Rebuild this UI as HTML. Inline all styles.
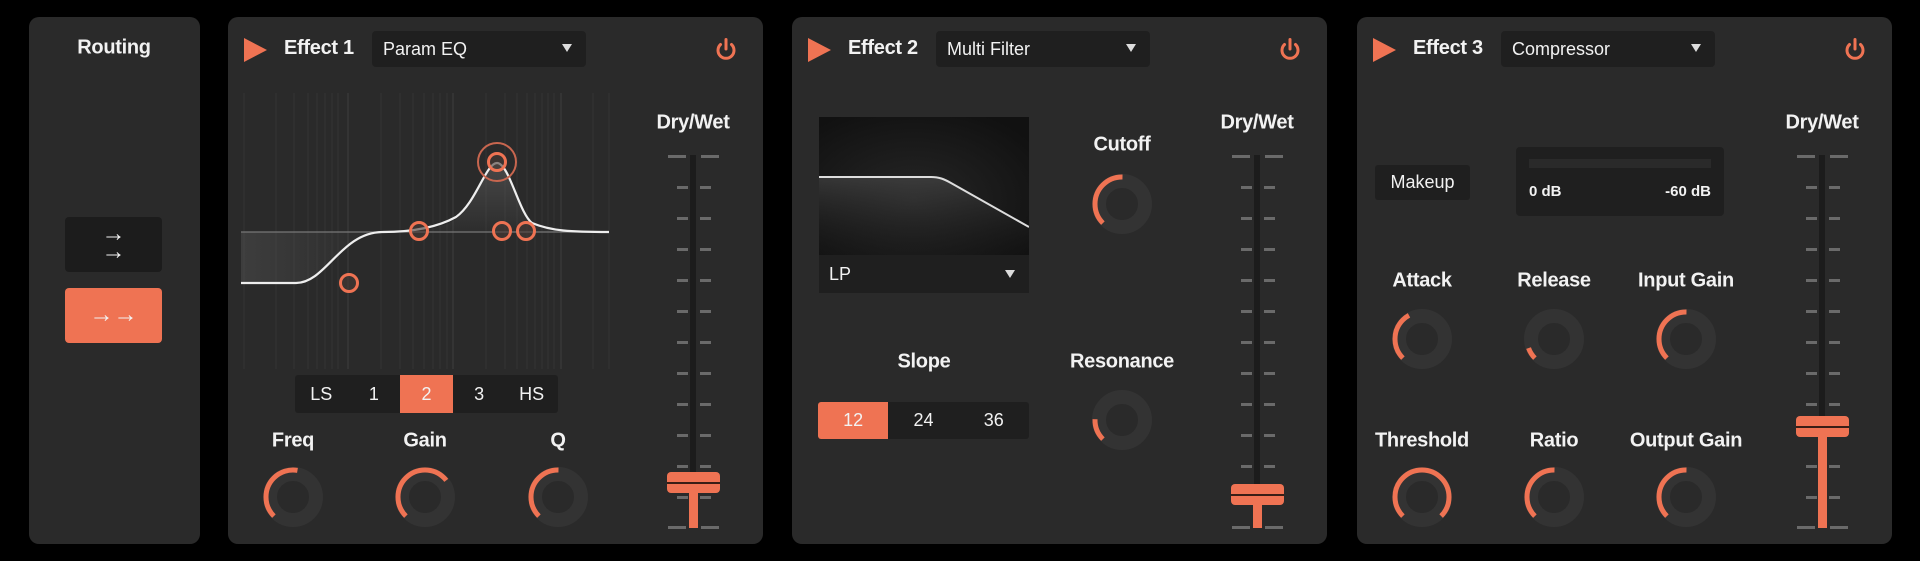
<!DOCTYPE html>
<html><head><meta charset="utf-8"><style>
*{margin:0;padding:0;box-sizing:border-box}
body{width:1920px;height:561px;background:#000;position:relative;overflow:hidden;font-family:"Liberation Sans",sans-serif;color:#f2f2f2}
.p{position:absolute;top:17px;height:527px;background:#2a2a2a;border-radius:10px}
.a{position:absolute}
.lbl{position:absolute;font-weight:bold;font-size:20px;transform:translate(-50%,-50%);white-space:nowrap;letter-spacing:-0.3px}
.play{position:absolute;left:16px;top:21px;width:0;height:0;border-top:12px solid transparent;border-bottom:12px solid transparent;border-left:23px solid #ef7353}
.title{position:absolute;left:56px;top:20px;font-weight:bold;font-size:20px;letter-spacing:-0.3px}
.dd{position:absolute;left:144px;top:14px;width:214px;height:36px;background:#1f1f1f;border-radius:4px;font-size:18px;padding:8px 0 0 11px}
.dd i,.lp i{position:absolute;right:14px;top:13px;width:0;height:0;border-left:5px solid transparent;border-right:5px solid transparent;border-top:8px solid #ddd}
.pw{position:absolute;left:486px;top:20px}
.track{position:absolute;left:462px;top:138px;width:6px;height:372px;background:#1c1c1c}
.tk{position:absolute;top:169px;width:11px;height:313px;background:repeating-linear-gradient(#6a6a6a 0 3px,transparent 3px 31px)}
.tl{position:absolute;width:18px;height:3px;background:#6a6a6a}
.hd{position:absolute;left:439px;width:53px;height:21px;background:#ef7353;border-radius:4px}
.hd:after{content:"";position:absolute;left:0;right:0;top:10px;height:2px;background:#3a1e16}
.st{position:absolute;left:461px;width:9px;background:#ef7353}
.seg{position:absolute;background:#1f1f1f;display:flex;font-size:18px;border-radius:3px;overflow:hidden}
.seg div{flex:1;text-align:center}
.seg .on{background:#ef7353}
</style></head><body>

<svg width="0" height="0" style="position:absolute"><defs>
<g id="pwr"><path d="M6.5 7.5 A8 8 0 1 0 17.5 7.5" fill="none" stroke="#ef7353" stroke-width="3" stroke-linecap="round"/><line x1="12" y1="2.5" x2="12" y2="12" stroke="#ef7353" stroke-width="3" stroke-linecap="round"/></g>
</defs></svg>

<!-- Routing -->
<div class="p" style="left:29px;width:171px">
  <div class="lbl" style="left:85px;top:31px">Routing</div>
  <div class="a" style="left:36px;top:200px;width:97px;height:55px;background:#1c1c1c;border-radius:4px"></div>
  <div class="a" style="left:36px;top:208px;width:97px;text-align:center;font-size:24px;line-height:18px;font-weight:bold">→<br>→</div>
  <div class="a" style="left:36px;top:271px;width:97px;height:55px;background:#ef7353;border-radius:4px;text-align:center;font-size:24px;line-height:53px;font-weight:bold">→→</div>
</div>

<!-- Effect 1 -->
<div class="p" style="left:228px;width:535px">
  <div class="play"></div><div class="title">Effect 1</div>
  <div class="dd">Param EQ<i></i></div>
  <svg class="pw" width="24" height="24"><use href="#pwr"/></svg>
  <svg class="a" style="left:13px;top:76px" width="370" height="276">
    <defs><linearGradient id="gf" x1="0" x2="1"><stop offset="0" stop-color="#555" stop-opacity=".45"/><stop offset="1" stop-color="#555" stop-opacity="0"/></linearGradient>
    <linearGradient id="gp" x1="0" y1="0" x2="0" y2="1"><stop offset="0" stop-color="#666" stop-opacity=".5"/><stop offset="1" stop-color="#666" stop-opacity=".05"/></linearGradient></defs>
    <g stroke="#343434" stroke-width="1">
      <line x1="3" y1="0" x2="3" y2="276"/><line x1="35" y1="0" x2="35" y2="276"/><line x1="53" y1="0" x2="53" y2="276"/><line x1="67" y1="0" x2="67" y2="276"/><line x1="76" y1="0" x2="76" y2="276"/><line x1="84" y1="0" x2="84" y2="276"/><line x1="91" y1="0" x2="91" y2="276"/><line x1="97" y1="0" x2="97" y2="276"/><line x1="107" y1="0" x2="107" y2="276" stroke="#3e3e3e"/><line x1="140" y1="0" x2="140" y2="276"/><line x1="159" y1="0" x2="159" y2="276"/><line x1="172" y1="0" x2="172" y2="276"/><line x1="183" y1="0" x2="183" y2="276"/><line x1="192" y1="0" x2="192" y2="276"/><line x1="199" y1="0" x2="199" y2="276"/><line x1="206" y1="0" x2="206" y2="276"/><line x1="212" y1="0" x2="212" y2="276" stroke="#3e3e3e"/><line x1="245" y1="0" x2="245" y2="276"/><line x1="264" y1="0" x2="264" y2="276"/><line x1="276" y1="0" x2="276" y2="276"/><line x1="286" y1="0" x2="286" y2="276"/><line x1="294" y1="0" x2="294" y2="276"/><line x1="301" y1="0" x2="301" y2="276"/><line x1="307" y1="0" x2="307" y2="276"/><line x1="313" y1="0" x2="313" y2="276"/><line x1="320" y1="0" x2="320" y2="276" stroke="#3e3e3e"/><line x1="352" y1="0" x2="352" y2="276"/><line x1="368" y1="0" x2="368" y2="276"/>
    </g>
    <path d="M0 139 L0 190 L55 190 C85 190 100 139 142 139 Z" fill="url(#gf)"/>
    <path d="M180 139 C200 134 210 130 215 126 C235 110 245 70 256 70 C268 70 278 120 291 130 C310 138 330 139 368 139 Z" fill="url(#gp)"/>
    <line x1="0" y1="139" x2="368" y2="139" stroke="#777" stroke-width="1.2"/>
    <path d="M0 190 L55 190 C85 190 100 139 142 139 C170 139 195 135 215 124 C235 110 245 70 256 70 C268 70 278 120 291 130 C310 138 330 139 368 139" fill="none" stroke="#eee" stroke-width="2.2"/>
    <g fill="#4a3a36" fill-opacity=".6" stroke="#ef7353" stroke-width="3">
      <circle cx="108" cy="190" r="8.5"/><circle cx="178" cy="138" r="8.5"/><circle cx="256" cy="69" r="8.5"/><circle cx="261" cy="138" r="8.5"/><circle cx="285" cy="138" r="8.5"/>
    </g>
    <circle cx="256" cy="69" r="19" fill="none" stroke="#c8664f" stroke-width="2"/>
  </svg>
  <div class="seg" style="left:67px;top:358px;width:263px;height:38px;line-height:38px"><div>LS</div><div>1</div><div class="on">2</div><div>3</div><div>HS</div></div>
  <div class="lbl" style="left:65px;top:424px">Freq</div>
  <div class="lbl" style="left:197px;top:424px">Gain</div>
  <div class="lbl" style="left:330px;top:424px">Q</div>
  <svg class="a" style="left:35px;top:450px" width="60" height="60"><circle cx="30" cy="30" r="23" fill="none" stroke="#333" stroke-width="14"/><circle cx="30" cy="30" r="27" fill="none" stroke="#ef7353" stroke-width="5" stroke-dasharray="68 300" transform="rotate(135 30 30)"/></svg>
  <svg class="a" style="left:167px;top:450px" width="60" height="60"><circle cx="30" cy="30" r="23" fill="none" stroke="#333" stroke-width="14"/><circle cx="30" cy="30" r="27" fill="none" stroke="#ef7353" stroke-width="5" stroke-dasharray="88 300" transform="rotate(135 30 30)"/></svg>
  <svg class="a" style="left:300px;top:450px" width="60" height="60"><circle cx="30" cy="30" r="23" fill="none" stroke="#333" stroke-width="14"/><circle cx="30" cy="30" r="27" fill="none" stroke="#ef7353" stroke-width="5" stroke-dasharray="64 300" transform="rotate(135 30 30)"/></svg>
  <div class="lbl" style="left:465px;top:106px">Dry/Wet</div>
  <div class="track"></div>
  <div class="tl" style="left:440px;top:138px"></div><div class="tl" style="left:473px;top:138px"></div>
  <div class="tk" style="left:449px"></div><div class="tk" style="left:472px"></div>
  <div class="tl" style="left:440px;top:509px"></div><div class="tl" style="left:473px;top:509px"></div>
  <div class="st" style="top:470px;height:41px"></div>
  <div class="hd" style="top:455px"></div>
</div>

<!-- Effect 2 -->
<div class="p" style="left:792px;width:535px">
  <div class="play"></div><div class="title">Effect 2</div>
  <div class="dd">Multi Filter<i></i></div>
  <svg class="pw" width="24" height="24"><use href="#pwr"/></svg>
  <svg class="a" style="left:27px;top:100px" width="210" height="138">
    <defs><radialGradient id="fb" cx=".45" cy=".6" r=".7"><stop offset="0" stop-color="#262626"/><stop offset="1" stop-color="#111"/></radialGradient>
    <linearGradient id="ff" x1="0" y1="0" x2="0" y2="1"><stop offset="0" stop-color="#555"/><stop offset="1" stop-color="#1a1a1a" stop-opacity="0"/></linearGradient></defs>
    <rect width="210" height="138" fill="url(#fb)"/>
    <path d="M0 60 L112 60 C120 60 125 62 132 66 L210 112 L210 138 L0 138 Z" fill="url(#ff)" opacity=".5"/>
    <path d="M0 60 L112 60 C120 60 125 62 132 66 L210 110" fill="none" stroke="#ddd" stroke-width="2"/>
  </svg>
  <div class="lp a" style="left:27px;top:238px;width:210px;height:38px;background:#1f1f1f;font-size:18px;padding:9px 0 0 10px">LP<i style="top:15px"></i></div>
  <div class="lbl" style="left:330px;top:128px">Cutoff</div>
  <svg class="a" style="left:300px;top:157px" width="60" height="60"><circle cx="30" cy="30" r="23" fill="none" stroke="#333" stroke-width="14"/><circle cx="30" cy="30" r="27" fill="none" stroke="#ef7353" stroke-width="5" stroke-dasharray="64 300" transform="rotate(135 30 30)"/></svg>
  <div class="lbl" style="left:132px;top:345px">Slope</div>
  <div class="seg" style="left:26px;top:385px;width:211px;height:37px;line-height:37px"><div class="on">12</div><div>24</div><div>36</div></div>
  <div class="lbl" style="left:330px;top:345px">Resonance</div>
  <svg class="a" style="left:300px;top:373px" width="60" height="60"><circle cx="30" cy="30" r="23" fill="none" stroke="#333" stroke-width="14"/><circle cx="30" cy="30" r="27" fill="none" stroke="#ef7353" stroke-width="5" stroke-dasharray="22 300" transform="rotate(135 30 30)"/></svg>
  <div class="lbl" style="left:465px;top:106px">Dry/Wet</div>
  <div class="track"></div>
  <div class="tl" style="left:440px;top:138px"></div><div class="tl" style="left:473px;top:138px"></div>
  <div class="tk" style="left:449px"></div><div class="tk" style="left:472px"></div>
  <div class="tl" style="left:440px;top:509px"></div><div class="tl" style="left:473px;top:509px"></div>
  <div class="st" style="top:480px;height:31px"></div>
  <div class="hd" style="top:467px"></div>
</div>

<!-- Effect 3 -->
<div class="p" style="left:1357px;width:535px">
  <div class="play"></div><div class="title">Effect 3</div>
  <div class="dd">Compressor<i></i></div>
  <svg class="pw" width="24" height="24"><use href="#pwr"/></svg>
  <div class="a" style="left:18px;top:148px;width:95px;height:35px;background:#1f1f1f;border-radius:3px;font-size:18px;text-align:center;line-height:35px">Makeup</div>
  <div class="a" style="left:159px;top:130px;width:208px;height:69px;background:#1f1f1f;border-radius:4px"></div>
  <div class="a" style="left:172px;top:142px;width:182px;height:9px;background:#2a2a2a"></div>
  <div class="a" style="left:172px;top:166px;font-size:15px;font-weight:bold">0 dB</div>
  <div class="a" style="left:300px;top:166px;width:54px;text-align:right;font-size:15px;font-weight:bold">-60 dB</div>
  <div class="lbl" style="left:65px;top:264px">Attack</div>
  <div class="lbl" style="left:197px;top:264px">Release</div>
  <div class="lbl" style="left:329px;top:264px">Input Gain</div>
  <svg class="a" style="left:35px;top:292px" width="60" height="60"><circle cx="30" cy="30" r="23" fill="none" stroke="#333" stroke-width="14"/><circle cx="30" cy="30" r="27" fill="none" stroke="#ef7353" stroke-width="5" stroke-dasharray="50 300" transform="rotate(135 30 30)"/></svg>
  <svg class="a" style="left:167px;top:292px" width="60" height="60"><circle cx="30" cy="30" r="23" fill="none" stroke="#333" stroke-width="14"/><circle cx="30" cy="30" r="27" fill="none" stroke="#ef7353" stroke-width="5" stroke-dasharray="12 300" transform="rotate(135 30 30)"/></svg>
  <svg class="a" style="left:299px;top:292px" width="60" height="60"><circle cx="30" cy="30" r="23" fill="none" stroke="#333" stroke-width="14"/><circle cx="30" cy="30" r="27" fill="none" stroke="#ef7353" stroke-width="5" stroke-dasharray="64 300" transform="rotate(135 30 30)"/></svg>
  <div class="lbl" style="left:65px;top:424px">Threshold</div>
  <div class="lbl" style="left:197px;top:424px">Ratio</div>
  <div class="lbl" style="left:329px;top:424px">Output Gain</div>
  <svg class="a" style="left:35px;top:450px" width="60" height="60"><circle cx="30" cy="30" r="23" fill="none" stroke="#333" stroke-width="14"/><circle cx="30" cy="30" r="27" fill="none" stroke="#ef7353" stroke-width="5" stroke-dasharray="127 300" transform="rotate(135 30 30)"/></svg>
  <svg class="a" style="left:167px;top:450px" width="60" height="60"><circle cx="30" cy="30" r="23" fill="none" stroke="#333" stroke-width="14"/><circle cx="30" cy="30" r="27" fill="none" stroke="#ef7353" stroke-width="5" stroke-dasharray="64 300" transform="rotate(135 30 30)"/></svg>
  <svg class="a" style="left:299px;top:450px" width="60" height="60"><circle cx="30" cy="30" r="23" fill="none" stroke="#333" stroke-width="14"/><circle cx="30" cy="30" r="27" fill="none" stroke="#ef7353" stroke-width="5" stroke-dasharray="64 300" transform="rotate(135 30 30)"/></svg>
  <div class="lbl" style="left:465px;top:106px">Dry/Wet</div>
  <div class="track"></div>
  <div class="tl" style="left:440px;top:138px"></div><div class="tl" style="left:473px;top:138px"></div>
  <div class="tk" style="left:449px"></div><div class="tk" style="left:472px"></div>
  <div class="tl" style="left:440px;top:509px"></div><div class="tl" style="left:473px;top:509px"></div>
  <div class="st" style="top:410px;height:101px"></div>
  <div class="hd" style="top:399px"></div>
</div>
</body></html>
